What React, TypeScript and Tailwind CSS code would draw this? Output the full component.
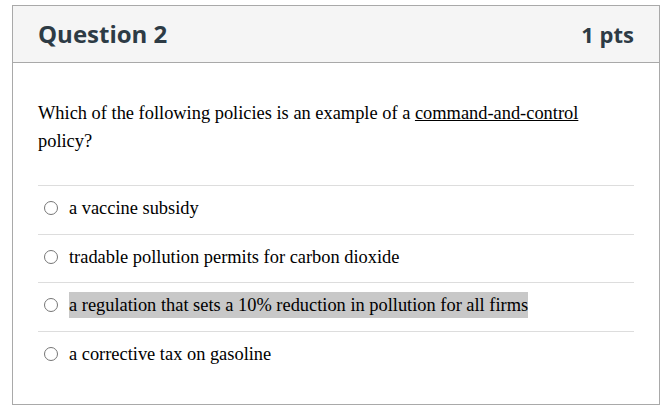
const answers = [
  { id: "a1", text: "a vaccine subsidy" },
  { id: "a2", text: "tradable pollution permits for carbon dioxide" },
  { id: "a3", text: "a regulation that sets a 10% reduction in pollution for all firms", selected: true },
  { id: "a4", text: "a corrective tax on gasoline" },
];

function Radio() {
  return <span className="block w-[14px] h-[14px] rounded-full border border-[#767676] bg-white shrink-0" />;
}

export default function App() {
  return (
    <div className="w-[669px] h-[414px] bg-white pt-[5px] pl-[12px]">
      <div className="w-[648px] h-[400px] border border-[#a9a9a9] flex flex-col">
        {/* header */}
        <div className="h-[57px] bg-[#f5f5f5] border-b border-[#a9a9a9] flex items-center justify-between px-[25px] font-[family-name:'Open_Sans',sans-serif] font-bold text-[#2d3b45]">
          <span className="text-[24px]">Question 2</span>
          <span className="text-[22px]">1 pts</span>
        </div>

        {/* body */}
        <div className="px-[25px] pt-[36px] font-[family-name:'Liberation_Serif','Times_New_Roman',serif] text-black">
          <p className="text-[18.4px] leading-[28px] w-[560px]">
            Which of the following policies is an example of a{" "}
            <span className="underline">command-and-control</span> policy?
          </p>

          <div className="mt-[30px]">
            {answers.map((a) => (
              <div key={a.id} className="border-t border-[#dddddd] h-[48.6px] flex items-center pl-[6px] pb-[3px] gap-[11px]">
                <Radio />
                <span className={`text-[18.4px] leading-[26px] ${a.selected ? "bg-[#c8c8c8]" : ""}`}>{a.text}</span>
              </div>
            ))}
          </div>
        </div>
      </div>
    </div>
  );
}
